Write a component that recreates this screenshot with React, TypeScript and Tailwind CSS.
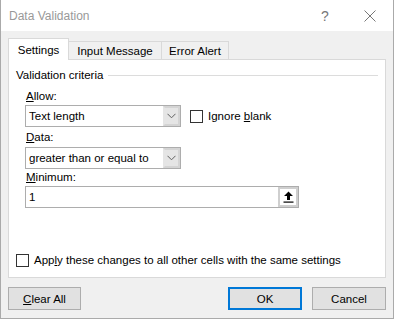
import React from "react";

function Chevron() {
  return (
    <svg width="9" height="6" viewBox="0 0 9 6" fill="none">
      <path d="M0.5 0.8 L4.5 4.8 L8.5 0.8" stroke="#606060" strokeWidth="1" />
    </svg>
  );
}

function Combo({ value, width }: { value: string; width: string }) {
  return (
    <div className={`flex h-[22px] ${width} border border-[#adadad] bg-white`}>
      <div className="flex flex-1 items-center whitespace-nowrap pl-[3px] text-black">{value}</div>
      <div className="flex w-[17px] items-center justify-center border-2 border-[#d4d4d4] bg-[#e5e5e5] border-l-[#e5e5e5]">
        <Chevron />
      </div>
    </div>
  );
}

function Checkbox() {
  return <div className="h-[13px] w-[13px] shrink-0 border border-[#333] bg-white" />;
}

export default function App() {
  return (
    <div
      className="relative h-[319px] w-[394px] overflow-hidden border-l border-r border-b border-[#aaa] bg-[#f0f0f0] text-[11.5px] leading-[16px] text-black"
      style={{ fontFamily: '"Liberation Sans", Arial, sans-serif' }}
    >
      {/* Title bar */}
      <div className="flex h-[31px] items-center bg-white pl-[8px]">
        <span className="flex-1 text-[12px] text-[#999]">Data Validation</span>
        <span className="w-[14px] text-[14px] text-[#777]">?</span>
        <span className="ml-[29px] mr-[17px] flex h-[12px] w-[12px] items-center justify-center">
          <svg width="12" height="12" viewBox="0 0 12 12">
            <path d="M0.5 0.5 L11.5 11.5 M11.5 0.5 L0.5 11.5" stroke="#777" strokeWidth="1" />
          </svg>
        </span>
      </div>

      {/* Tabs */}
      <div className="mt-[7px] flex items-end px-[7px]">
        <div className="relative z-10 -mb-px flex h-[22px] w-[61px] items-center justify-center border border-b-0 border-[#d9d9d9] bg-white">
          Settings
        </div>
        <div className="flex h-[18px] w-[93px] items-center justify-center border border-l-0 border-b-0 border-[#d9d9d9] bg-[#f0f0f0]">
          Input Message
        </div>
        <div className="flex h-[18px] w-[67px] items-center justify-center border border-l-0 border-b-0 border-[#d9d9d9] bg-[#f0f0f0]">
          Error Alert
        </div>
      </div>

      {/* Panel */}
      <div className="mx-[7px] h-[219px] border border-[#d9d9d9] bg-white">
        <div className="ml-[7px] mr-[7px] mt-[7px] flex items-center gap-[5px]">
          <span className="whitespace-nowrap">Validation criteria</span>
          <div className="h-px flex-1 bg-[#dcdcdc]" />
        </div>

        <div className="ml-[16px] mt-[5px]">
          <div className="pl-px">
            <u>A</u>llow:
          </div>
          <div className="mt-[1px] flex items-center">
            <Combo value="Text length" width="w-[156px]" />
            <div className="ml-[9px] flex items-center gap-[5px]">
              <Checkbox />
              <span className="whitespace-nowrap">
                Ignore <u>b</u>lank
              </span>
            </div>
          </div>

          <div className="mt-[2px] pl-px">
            <u>D</u>ata:
          </div>
          <div className="mt-[2px]">
            <Combo value="greater than or equal to" width="w-[156px]" />
          </div>

          <div className="pl-px">
            <u>M</u>inimum:
          </div>
          <div className="mt-[1px] flex h-[22px] w-[274px] border border-[#adadad] bg-white">
            <div className="flex flex-1 items-center pl-[3px]">1</div>
            <div className="flex w-[20px] items-center justify-center border-2 border-[#cfcfcf] bg-white">
              <svg width="11" height="12" viewBox="0 0 11 12">
                <path d="M5.5 0.5 L10 5 L7 5 L7 9 L4 9 L4 5 L1 5 Z" fill="#000" />
                <rect x="0.5" y="10.5" width="10" height="1.2" fill="#000" />
              </svg>
            </div>
          </div>
        </div>

        <div className="ml-[7px] mt-[44px] flex items-center gap-[5px]">
          <Checkbox />
          <span className="whitespace-nowrap">
            App<u>l</u>y these changes to all other cells with the same settings
          </span>
        </div>
      </div>

      {/* Buttons */}
      <div className="mt-[9px] flex px-[7px]">
        <button className="flex h-[23px] w-[73px] items-center justify-center border border-[#adadad] bg-[#e1e1e1]">
          <span>
            <u>C</u>lear All
          </span>
        </button>
        <div className="flex-1" />
        <button className="flex h-[23px] w-[74px] items-center justify-center border-2 border-[#0078d7] bg-[#e1e1e1]">
          OK
        </button>
        <button className="ml-[10px] flex h-[23px] w-[74px] items-center justify-center border border-[#adadad] bg-[#e1e1e1]">
          Cancel
        </button>
      </div>
    </div>
  );
}
